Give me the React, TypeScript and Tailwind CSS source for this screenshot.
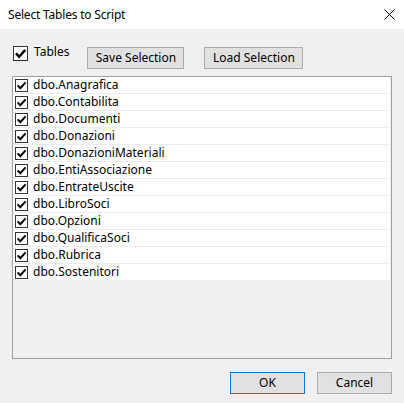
const tables = [
  "dbo.Anagrafica",
  "dbo.Contabilita",
  "dbo.Documenti",
  "dbo.Donazioni",
  "dbo.DonazioniMateriali",
  "dbo.EntiAssociazione",
  "dbo.EntrateUscite",
  "dbo.LibroSoci",
  "dbo.Opzioni",
  "dbo.QualificaSoci",
  "dbo.Rubrica",
  "dbo.Sostenitori",
];

const Check = ({ size = 13 }: { size?: number }) => (
  <span
    className="flex items-center justify-center bg-white border border-[#333333] shrink-0"
    style={{ width: size, height: size }}
  >
    <svg width={size - 2} height={size - 2} viewBox="0 0 11 11">
      <path d="M1.6 5.4 L4.3 8.2 L9.6 2.4" fill="none" stroke="#000" strokeWidth="2" />
    </svg>
  </span>
);

const WinButton = ({ label, primary = false, className = "" }: { label: string; primary?: boolean; className?: string }) => (
  <button
    className={`h-[22px] flex items-center justify-center bg-[#e1e1e1] border ${
      primary ? "border-[#0078d7]" : "border-[#adadad]"
    } text-[12px] text-black ${className}`}
  >
    {label}
  </button>
);

export default function App() {
  return (
    <div
      className="w-[404px] h-[403px] flex flex-col bg-[#f0f0f0] text-black overflow-hidden"
      style={{ fontFamily: '"Noto Sans", "Open Sans", sans-serif' }}
    >
      {/* title bar */}
      <div className="h-[29px] bg-white flex items-center justify-between pl-2 pr-[9px]">
        <span className="text-[12px] tracking-[-0.2px]">Select Tables to Script</span>
        <svg width="11" height="11" viewBox="0 0 11 11">
          <path d="M0.5 0.5 L10.5 10.5 M10.5 0.5 L0.5 10.5" stroke="#000" strokeWidth="1" />
        </svg>
      </div>

      <div className="flex-1 flex flex-col px-3 pb-[8px]">
        {/* toolbar */}
        <div className="h-[47px] flex items-start pt-[18px]">
          <div className="flex items-center ml-[1px] -mt-[1px]">
            <Check size={15} />
            <span className="text-[12px] ml-[6px] -mt-[3px]">Tables</span>
          </div>
          <WinButton label="Save Selection" className="w-[97px] ml-[18px]" />
          <WinButton label="Load Selection" className="w-[99px] ml-[20px]" />
        </div>

        {/* list */}
        <div className="h-[283px] w-[380px] border border-[#a0a0a0] flex flex-col pr-[1px]">
          {tables.map((t) => (
            <div
              key={t}
              className="h-[17px] bg-white border-b border-[#ececec] flex items-center pl-[2px] shrink-0"
            >
              <Check />
              <span className="text-[12px] ml-[5px] leading-none">{t}</span>
            </div>
          ))}
        </div>

        {/* footer */}
        <div className="flex justify-end gap-[12px] mt-[13px]">
          <WinButton label="OK" primary className="w-[75px]" />
          <WinButton label="Cancel" className="w-[75px]" />
        </div>
      </div>
    </div>
  );
}
